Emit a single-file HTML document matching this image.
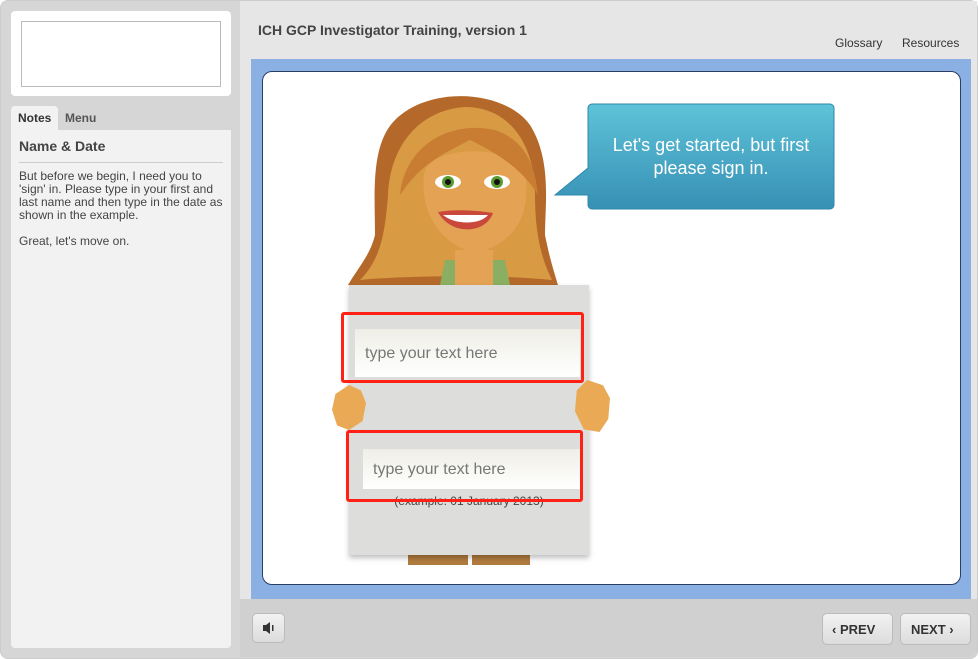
<!DOCTYPE html>
<html><head><style>
*{margin:0;padding:0;box-sizing:border-box}
body{width:978px;height:659px;background:#fff;font-family:"Liberation Sans",Arial,sans-serif;position:relative;overflow:hidden}
.a{position:absolute}
</style></head><body>
<div class="a" style="left:0;top:0;width:978px;height:659px;background:#d6d6d6;border-radius:8px;border:1px solid #ccc"></div>
<div class="a" style="left:240px;top:1px;width:737px;height:598px;background:#e6e6e6"></div>
<div class="a" style="left:240px;top:599px;width:737px;height:58px;background:#d0d0d0;border-bottom-right-radius:8px"></div>
<div class="a" style="left:11px;top:11px;width:220px;height:85px;background:#fff;border-radius:4px"></div>
<div class="a" style="left:21px;top:21px;width:200px;height:66px;border:1px solid #bbb"></div>
<div class="a" style="left:11px;top:106px;width:47px;height:25px;background:#f2f2f2;border-radius:4px 4px 0 0;font-size:12px;font-weight:bold;color:#333;padding:5px 0 0 7px">Notes</div>
<div class="a" style="left:65px;top:111px;font-size:12px;font-weight:bold;color:#555">Menu</div>
<div class="a" style="left:11px;top:130px;width:220px;height:518px;background:#f2f2f2;border-radius:0 0 4px 4px"></div>
<div class="a" style="left:19px;top:138px;font-size:14px;font-weight:bold;color:#444">Name &amp; Date</div>
<div class="a" style="left:19px;top:162px;width:204px;height:1px;background:#ccc"></div>
<div class="a" style="left:19px;top:170px;width:210px;font-size:12px;line-height:13px;color:#444">But before we begin, I need you to<br>'sign' in. Please type in your first and last name and then type in the date as shown in the example.<br><br>Great, let's move on.</div>
<div class="a" style="left:258px;top:22px;font-size:14px;font-weight:bold;color:#444">ICH GCP Investigator Training, version 1</div>
<div class="a" style="left:835px;top:36px;font-size:12px;color:#333">Glossary</div>
<div class="a" style="left:902px;top:36px;font-size:12px;color:#333">Resources</div>
<div class="a" style="left:251px;top:59px;width:720px;height:540px;background:#8bb0e3"></div>
<div class="a" style="left:262px;top:71px;width:699px;height:514px;background:#fff;border:1px solid #2c3e66;border-radius:10px"></div>
<svg class="a" style="left:550px;top:100px" width="290" height="115"><defs><linearGradient id="g" x1="0" y1="0" x2="0" y2="1"><stop offset="0" stop-color="#5ec3d8"/><stop offset="1" stop-color="#3790b5"/></linearGradient></defs>
<path d="M42 4 H280 a4 4 0 0 1 4 4 V105 a4 4 0 0 1 -4 4 H42 a4 4 0 0 1 -4 -4 V95 H5 L38 68 V8 a4 4 0 0 1 4 -4Z" fill="url(#g)" stroke="#2f87ad"/></svg>
<div class="a" style="left:588px;top:134px;width:246px;text-align:center;font-size:18px;line-height:23px;color:#fff;font-family:'Liberation Sans',sans-serif">Let's get started, but first please sign in.</div>
<svg class="a" style="left:320px;top:85px" width="310" height="490">
<path d="M28 200 C40 180 50 170 55 150 C55 110 50 60 75 35 C110 0 185 5 210 40 C232 75 225 120 225 150 C230 175 235 190 238 200 C200 203 80 203 28 200Z" fill="#b4692a"/>
<path d="M40 195 C60 175 65 150 68 110 C70 60 100 25 145 22 C190 22 215 60 215 110 C215 150 222 175 232 195 C190 190 90 190 40 195Z" fill="#d99a44"/>
<path d="M120 200 L190 200 L185 175 L125 175Z" fill="#8aae62"/>
<rect x="135" y="165" width="38" height="35" fill="#e4a254"/>
<path d="M104 90 C106 60 200 55 206 95 C210 135 190 160 156 168 C122 160 100 130 104 90Z" fill="#e4a254"/>
<path d="M80 110 C85 60 130 35 175 45 C205 55 215 80 218 110 C200 80 170 65 150 55 C120 70 100 80 80 110Z" fill="#c87d33"/>
<ellipse cx="128" cy="97" rx="13" ry="7" fill="#fff"/><circle cx="128" cy="97" r="6" fill="#5a9a2e"/><circle cx="128" cy="97" r="3" fill="#111"/>
<ellipse cx="177" cy="97" rx="13" ry="7" fill="#fff"/><circle cx="177" cy="97" r="6" fill="#5a9a2e"/><circle cx="177" cy="97" r="3" fill="#111"/>
<path d="M118 127 C135 124 155 125 173 128 C165 150 130 150 118 127Z" fill="#c9473b"/>
<path d="M123 130 L168 130 C160 140 135 140 123 130Z" fill="#fff"/>
<rect x="88" y="348" width="60" height="132" fill="#b07b3e"/><rect x="152" y="348" width="58" height="132" fill="#b07b3e"/>
</svg>
<div class="a" style="left:349px;top:285px;width:240px;height:270px;background:#dddddc;box-shadow:0 3px 5px rgba(0,0,0,.25)"></div>
<div class="a" style="left:332px;top:385px;width:34px;height:45px;background:#e9a955;clip-path:polygon(50% 0,85% 12%,100% 40%,90% 80%,50% 100%,15% 90%,0 55%,10% 20%)"></div>
<div class="a" style="left:575px;top:380px;width:35px;height:52px;background:#e9a955;clip-path:polygon(35% 0,80% 10%,100% 35%,95% 75%,70% 100%,25% 95%,0 60%,5% 20%)"></div>
<div class="a" style="left:355px;top:329px;width:225px;height:48px;background:linear-gradient(#efeee6,#fff);font-size:16px;color:#777;padding:16px 0 0 10px">type your text here</div>
<div class="a" style="left:341px;top:312px;width:243px;height:71px;border:3px solid #ff2016;border-radius:3px"></div>
<div class="a" style="left:363px;top:449px;width:217px;height:40px;background:linear-gradient(#efeee6,#fff);font-size:16px;color:#777;padding:12px 0 0 10px">type your text here</div>
<div class="a" style="left:349px;top:494px;width:240px;text-align:center;font-size:12px;color:#444">(example: 01 January 2013)</div>
<div class="a" style="left:346px;top:430px;width:237px;height:72px;border:3px solid #ff2016;border-radius:3px"></div>
<div class="a" style="left:252px;top:613px;width:33px;height:30px;border:1px solid #bbb;border-radius:5px;background:linear-gradient(#f2f2f2,#dcdcdc)"></div>
<svg class="a" style="left:262px;top:621px" width="14" height="14"><path d="M1 4 H4 L8 1 V13 L4 10 H1Z" fill="#333"/><rect x="10" y="4" width="1.5" height="6" fill="#333"/></svg>
<div class="a" style="left:822px;top:613px;width:71px;height:32px;border:1px solid #bbb;border-radius:5px;background:linear-gradient(#f2f2f2,#dcdcdc);font-size:13px;font-weight:bold;color:#333;padding:8px 0 0 9px">&#x2039; PREV</div>
<div class="a" style="left:900px;top:613px;width:71px;height:32px;border:1px solid #bbb;border-radius:5px;background:linear-gradient(#f2f2f2,#dcdcdc);font-size:13px;font-weight:bold;color:#333;padding:8px 0 0 10px">NEXT &#x203A;</div>
</body></html>
